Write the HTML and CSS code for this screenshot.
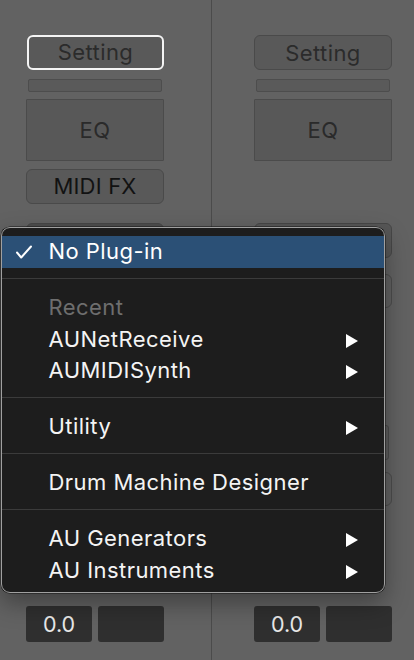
FILE: index.html
```html
<!DOCTYPE html>
<html lang="en">
<head>
<meta charset="utf-8">
<title>Plug-in menu</title>
<link rel="stylesheet" href="styles.css">
</head>
<body>
<div class="mixer">
  <div class="strip strip-left">
    <div class="btn btn-setting focused">Setting</div>
    <div class="bar"></div>
    <div class="slot">EQ</div>
    <div class="btn btn-midi">MIDI FX</div>
    <div class="btn btn-inst"></div>
    <div class="io">
      <div class="num">0.0</div>
      <div class="num"></div>
    </div>
  </div>
  <div class="divider"></div>
  <div class="strip strip-right">
    <div class="btn btn-setting">Setting</div>
    <div class="bar"></div>
    <div class="slot">EQ</div>
    <div class="btn btn-inst btn-inst-right"></div>
    <div class="btn btn-outline"></div>
    <div class="btn btn-narrow"></div>
    <div class="btn btn-outline btn-low"></div>
    <div class="io">
      <div class="num">0.0</div>
      <div class="num"></div>
    </div>
  </div>
</div>

<div class="menu">
  <div class="item selected">
    <span class="check"><svg width="16" height="14" viewBox="0 0 16 14"><polyline points="1,7.5 5.2,12.5 15,1.5" fill="none" stroke="#ffffff" stroke-width="2" stroke-linecap="round" stroke-linejoin="round"/></svg></span>
    <span class="label">No Plug-in</span>
  </div>
  <div class="sep"></div>
  <div class="item heading"><span class="check"></span><span class="label">Recent</span></div>
  <div class="item"><span class="check"></span><span class="label">AUNetReceive</span><span class="arrow"><svg width="12" height="14" viewBox="0 0 12 14"><polygon points="0,0 12,7 0,14" fill="#ffffff"/></svg></span></div>
  <div class="item"><span class="check"></span><span class="label">AUMIDISynth</span><span class="arrow"><svg width="12" height="14" viewBox="0 0 12 14"><polygon points="0,0 12,7 0,14" fill="#ffffff"/></svg></span></div>
  <div class="sep"></div>
  <div class="item"><span class="check"></span><span class="label">Utility</span><span class="arrow"><svg width="12" height="14" viewBox="0 0 12 14"><polygon points="0,0 12,7 0,14" fill="#ffffff"/></svg></span></div>
  <div class="sep"></div>
  <div class="item"><span class="check"></span><span class="label">Drum Machine Designer</span></div>
  <div class="sep"></div>
  <div class="item"><span class="check"></span><span class="label">AU Generators</span><span class="arrow"><svg width="12" height="14" viewBox="0 0 12 14"><polygon points="0,0 12,7 0,14" fill="#ffffff"/></svg></span></div>
  <div class="item"><span class="check"></span><span class="label">AU Instruments</span><span class="arrow"><svg width="12" height="14" viewBox="0 0 12 14"><polygon points="0,0 12,7 0,14" fill="#ffffff"/></svg></span></div>
</div>
</body>
</html>
```

FILE: styles.css
```css
html, body {
  margin: 0;
  padding: 0;
}

body {
  width: 414px;
  height: 660px;
  overflow: hidden;
  background: #626262;
  font-family: "Inter", "Noto Sans", sans-serif;
  position: relative;
}

.mixer {
  display: flex;
  height: 660px;
}

.strip {
  display: flex;
  flex-direction: column;
  box-sizing: border-box;
  padding-top: 35px;
  padding-bottom: 18px;
}

.strip-left {
  width: 211px;
  padding-left: 26px;
}

.strip-right {
  flex: 1;
  padding-left: 42px;
}

.divider {
  width: 1px;
  background: #4b4b4b;
}

.btn,
.bar,
.slot {
  box-sizing: border-box;
  width: 138px;
}

.btn {
  height: 35px;
  border-radius: 6px;
  background: #595959;
  border: 1px solid #4a4a4a;
  display: flex;
  align-items: center;
  justify-content: center;
  font-size: 22px;
  letter-spacing: 0.4px;
  color: #2b2b2b;
}

.btn-setting.focused {
  border: 2px solid #f4f4f4;
  width: 137px;
  margin-left: 1px;
  height: 34.5px;
}

.bar {
  height: 13px;
  margin: 9px 0 0 2px;
  width: 134px;
  border-radius: 2px;
  background: #5a5a5a;
  border: 1px solid #4d4d4d;
}

.slot {
  height: 62px;
  margin-top: 7px;
  background: #585858;
  border: 1px solid #4b4b4b;
  border-radius: 1px;
  display: flex;
  align-items: center;
  justify-content: center;
  font-size: 22px;
  letter-spacing: 0.4px;
  color: #2a2a2a;
}

.btn-midi {
  margin-top: 8px;
  color: #121212;
  letter-spacing: 0.2px;
}

.btn-inst {
  margin-top: 19px;
  background: #4e4e4e;
  border-color: #474747;
}

.btn-inst-right {
  margin-top: 62px;
  background: #575757;
}

.btn-outline {
  margin-top: 16px;
  background: #606060;
  border-color: #4c4c4c;
  height: 34px;
}

.btn-narrow {
  margin-top: 117px;
  width: 135px;
  border-radius: 3px;
  background: #5d5d5d;
}

.btn-low {
  margin-top: 12px;
}

.io {
  margin-top: auto;
  display: flex;
  gap: 6px;
}

.num {
  width: 66px;
  height: 36px;
  border-radius: 3px;
  background: #2f2f2f;
  color: #e8e8e8;
  font-size: 21.5px;
  display: flex;
  align-items: center;
  justify-content: center;
}

/* popup menu */
.menu {
  position: absolute;
  left: 1px;
  top: 227.3px;
  width: 384px;
  box-sizing: border-box;
  padding: 8px 0 6px;
  background: #1d1d1d;
  border: 1.5px solid #a0a0a0;
  border-radius: 9px;
  box-shadow: 0 0 0 0.5px #151515, 0 10px 24px rgba(0, 0, 0, 0.35);
  font-size: 22px;
  letter-spacing: 0.45px;
  color: #f4f4f4;
}

.item {
  display: flex;
  align-items: center;
  height: 31.5px;
  line-height: 31.5px;
  padding-left: 13.5px;
  padding-right: 26.5px;
  white-space: nowrap;
}

.item.selected {
  background: #2b5076;
  color: #ffffff;
}

.item.heading {
  color: #6e6e6e;
}

.check {
  width: 33px;
  flex: none;
  display: flex;
  align-items: center;
}

.label {
  flex: 1;
}

.arrow {
  display: flex;
  align-items: center;
  margin-top: 2px;
}

.sep {
  height: 1px;
  background: #3b3b3b;
  margin: 10.5px 0 13px;
}
```
